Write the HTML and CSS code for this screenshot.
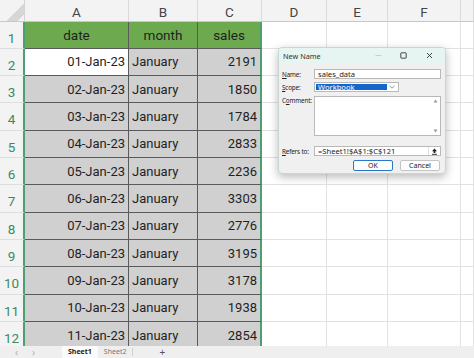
FILE: index.html
```html
<!DOCTYPE html>
<html lang="en">
<head>
<meta charset="UTF-8">
<title>New Name</title>
<link rel="stylesheet" href="styles.css">
</head>
<body>
<div class="app">
    <div class="sheet" id="sheet"></div>

    <div class="tabs">
        <span class="nav">&lsaquo;</span>
        <span class="nav">&rsaquo;</span>
        <span class="tab active">Sheet1</span>
        <span class="tab">Sheet2</span>
        <span class="tab-sep"></span>
        <span class="add">+</span>
    </div>

    <div class="dialog">
        <div class="title-bar">
            <span class="title">New Name</span>
            <span class="ctl ctl-min">
                <svg width="7" height="7" viewBox="0 0 7 7"><path d="M0.5 3.5h6" stroke="#c4c4c4" stroke-width="0.8"/></svg>
            </span>
            <span class="ctl ctl-max">
                <svg width="7" height="7" viewBox="0 0 7 7"><rect x="0.8" y="0.8" width="5.4" height="5.4" rx="0.6" fill="none" stroke="#333" stroke-width="0.9"/></svg>
            </span>
            <span class="ctl ctl-close">
                <svg width="7" height="7" viewBox="0 0 7 7"><path d="M1 1l5 5M6 1l-5 5" stroke="#333" stroke-width="0.9"/></svg>
            </span>
        </div>
        <div class="form">
            <label class="lbl"><u>N</u>ame:</label>
            <div class="field">sales_data</div>

            <label class="lbl"><u>S</u>cope:</label>
            <div class="scope">
                <span class="scope-value">Workbook</span>
                <span class="scope-arrow">
                    <svg width="6" height="4" viewBox="0 0 6 4"><path d="M0.5 0.8l2.5 2.4l2.5-2.4" fill="none" stroke="#777" stroke-width="0.8"/></svg>
                </span>
            </div>

            <label class="lbl lbl-top">C<u>o</u>mment:</label>
            <div class="comment">
                <div class="comment-text"></div>
                <div class="scroll">
                    <svg width="5" height="4" viewBox="0 0 5 4"><path d="M2.5 0.5L4.5 3.5H0.5Z" fill="#9a9a9a"/></svg>
                    <svg width="5" height="4" viewBox="0 0 5 4"><path d="M2.5 3.5L4.5 0.5H0.5Z" fill="#9a9a9a"/></svg>
                </div>
            </div>

            <label class="lbl lbl-refers"><u>R</u>efers to:</label>
            <div class="field refers">
                <span class="refers-text">=Sheet1!$A$1:$C$121</span>
                <span class="collapse">
                    <svg width="7" height="7" viewBox="0 0 7 7"><path d="M3.5 0.6L6 3.2H4.4V4.9H2.6V3.2H1Z" fill="#222"/><path d="M1 6.3h5" stroke="#222" stroke-width="0.9"/></svg>
                </span>
            </div>
        </div>
        <div class="buttons">
            <button class="btn btn-default">OK</button>
            <button class="btn">Cancel</button>
        </div>
    </div>
</div>
<script>
    const sales = [2191, 1850, 1784, 2833, 2236, 3303, 2776, 3195, 3178, 1938, 2854];
    const sheet = document.getElementById("sheet");

    function addCell(cls, text) {
        const el = document.createElement("div");
        el.className = "cell " + cls;
        el.textContent = text || "";
        sheet.appendChild(el);
    }

    // column headers
    addCell("corner");
    ["A", "B", "C", "D", "E", "F", ""].forEach(letter => addCell("col-head", letter));

    // header row
    addCell("row-head", "1");
    addCell("tbl head", "date");
    addCell("tbl head", "month");
    addCell("tbl head last", "sales");
    addCell("empty"); addCell("empty"); addCell("empty"); addCell("empty");

    sales.forEach((value, i) => {
        const day = String(i + 1).padStart(2, "0");
        addCell("row-head", String(i + 2));
        addCell("tbl num" + (i === 0 ? " active" : ""), day + "-Jan-23");
        addCell("tbl", "January");
        addCell("tbl num last", value);
        addCell("empty"); addCell("empty"); addCell("empty"); addCell("empty");
    });
</script>
</body>
</html>
```

FILE: styles.css
```css
body {
    margin: 0;
    background: #fff;
    overflow: hidden;
}
.app {
    position: relative;
    width: 474px;
    height: 358px;
    overflow: hidden;
    font-family: Roboto, "Liberation Sans", sans-serif;
}
.sheet {
    display: grid;
    grid-template-columns: 25px 104px 69px 64px 65px 61px 73px 13px;
    grid-template-rows: 22px 26.5px;
    grid-auto-rows: 27.35px;
    height: 346px;
    overflow: hidden;
}
.cell {
    box-sizing: border-box;
    border-right: 1px solid #e2e2e2;
    border-bottom: 1px solid #e2e2e2;
    display: flex;
    align-items: center;
    padding: 0 3px;
    font-size: 13px;
    color: #1f1f1f;
    white-space: nowrap;
    overflow: hidden;
}
.corner {
    background: #f3f3f3 linear-gradient(135deg, transparent 62%, #d6d6d6 62%, #d6d6d6 86%, transparent 86%);
    border-bottom-color: #c8c8c8;
    border-right-color: #d4d4d4;
}
.col-head {
    background: #f3f3f3;
    justify-content: center;
    color: #454545;
    font-size: 13.5px;
    padding-top: 3px;
    border-bottom-color: #c8c8c8;
    border-right-color: #dadada;
}
.row-head {
    background: #f3f3f3;
    justify-content: center;
    color: #3c8a5e;
    font-size: 13.5px;
    padding: 6px 0 0;
    border-bottom-color: #dedede;
    border-right: 2px solid #4c9f73;
}
.tbl {
    background: #d0d0d0;
    border-right-color: #5a5a5a;
    border-bottom-color: #5a5a5a;
}
.tbl.head {
    background: #6daa4f;
    justify-content: center;
    font-size: 13.5px;
}
.tbl.num {
    justify-content: flex-end;
}
.tbl.active {
    background: #fff;
}
.tbl.last {
    border-right: 2px solid #4c9f73;
}
.empty {
    background: #fff;
}

.tabs {
    display: flex;
    align-items: center;
    height: 12px;
    background: #efefef;
    font-family: "Noto Sans", sans-serif;
    font-size: 7px;
    color: #777;
}
.nav {
    width: 17px;
    text-align: center;
    font-size: 10px;
    color: #b0b0b0;
}
.nav:first-child {
    margin-left: 8px;
}
.tab {
    padding: 0 6px;
    height: 12px;
    line-height: 12px;
}
.tab.active {
    margin-left: 20px;
    background: #fbfbfb;
    color: #1a1a1a;
    font-weight: bold;
}
.tab-sep {
    width: 1px;
    height: 8px;
    background: #cfcfcf;
}
.add {
    margin-left: 26px;
    font-size: 10px;
    color: #555;
}

.dialog {
    position: absolute;
    left: 278px;
    top: 47px;
    width: 168px;
    height: 127px;
    box-sizing: border-box;
    background: #f0f0f0;
    border: 1px solid #c9d6d4;
    border-radius: 4px;
    box-shadow: 0 3px 10px rgba(0,0,0,0.28);
    font-family: "Noto Sans", sans-serif;
    font-size: 6.6px;
    color: #222;
    overflow: hidden;
}
.title-bar {
    display: flex;
    align-items: center;
    height: 15px;
    background: #e6f4f2;
}
.title {
    flex: 1;
    padding-left: 4px;
    color: #333;
    font-size: 7.3px;
}
.ctl {
    width: 25px;
    display: flex;
    justify-content: center;
}
.ctl-close {
    width: 26px;
    margin-right: 3px;
}
.form {
    display: grid;
    grid-template-columns: 32px 127px;
    grid-template-rows: 10px 10px 41px 17px;
    row-gap: 3px;
    padding: 6px 0 0 3px;
}
.lbl {
    display: flex;
    align-items: center;
    white-space: nowrap;
    font-size: 6.3px;
    letter-spacing: -0.15px;
}
.lbl-top {
    align-items: flex-start;
    margin-top: 1px;
}
.field {
    box-sizing: border-box;
    background: #fff;
    border: 1px solid #b9b9b9;
    display: flex;
    align-items: center;
    padding-left: 3px;
    font-size: 7.6px;
}
.scope {
    box-sizing: border-box;
    width: 85px;
    background: #fff;
    border: 1px solid #b9b9b9;
    display: flex;
    align-items: center;
    padding: 1px;
}
.scope-value {
    flex: 1;
    height: 100%;
    background: #1466cc;
    color: #fff;
    display: flex;
    align-items: center;
    padding-left: 2px;
    font-size: 7.6px;
}
.scope-arrow {
    width: 10px;
    display: flex;
    justify-content: center;
}
.comment {
    margin-top: 1px;
    box-sizing: border-box;
    background: #fff;
    border: 1px solid #b9b9b9;
    display: flex;
}
.comment-text {
    flex: 1;
}
.scroll {
    width: 9px;
    display: flex;
    flex-direction: column;
    justify-content: space-between;
    align-items: center;
    padding: 2px 0;
}
.lbl-refers,
.refers {
    align-self: end;
    height: 10px;
}
.refers {
    padding-right: 1px;
}
.refers-text {
    flex: 1;
}
.collapse {
    width: 10px;
    height: 8px;
    display: flex;
    justify-content: center;
    align-items: center;
    border-left: 1px solid #e2e2e2;
}
.buttons {
    display: flex;
    justify-content: flex-end;
    gap: 7px;
    padding: 4px 5px 0 0;
}
.btn {
    box-sizing: border-box;
    width: 40px;
    height: 11px;
    padding: 0;
    font-family: "Noto Sans", sans-serif;
    font-size: 7px;
    color: #222;
    background: #fdfdfd;
    border: 1px solid #c4c4c4;
    border-radius: 2px;
}
.btn-default {
    border-color: #2a77c9;
}
```
